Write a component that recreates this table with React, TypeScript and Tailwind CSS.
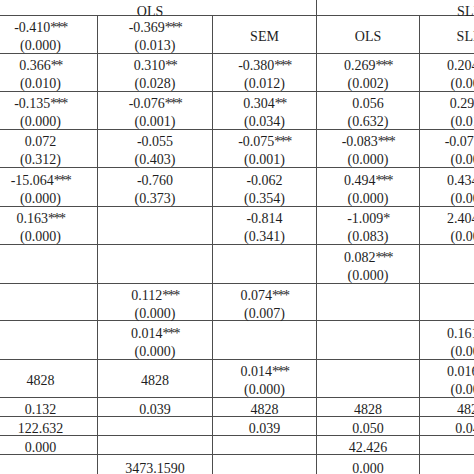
import type { ReactNode } from 'react';

type Cell = string[];

// heights of the body rows, px (border included)
const rowHeights = [38, 38, 38, 38, 39, 38, 39, 37, 39, 38, 19, 19, 19, 24];

const rows: Cell[][] = [
  [['-0.410***', '(0.000)'], ['-0.369***', '(0.013)'], ['SEM'], ['OLS'], ['SLM'], []],
  [['0.366**', '(0.010)'], ['0.310**', '(0.028)'], ['-0.380***', '(0.012)'], ['0.269***', '(0.002)'], ['0.204***', '(0.006)'], []],
  [['-0.135***', '(0.000)'], ['-0.076***', '(0.001)'], ['0.304**', '(0.034)'], ['0.056', '(0.632)'], ['0.295**', '(0.013)'], []],
  [['0.072', '(0.312)'], ['-0.055', '(0.403)'], ['-0.075***', '(0.001)'], ['-0.083***', '(0.000)'], ['-0.077***', '(0.000)'], []],
  [['-15.064***', '(0.000)'], ['-0.760', '(0.373)'], ['-0.062', '(0.354)'], ['0.494***', '(0.000)'], ['0.434***', '(0.000)'], []],
  [['0.163***', '(0.000)'], [], ['-0.814', '(0.341)'], ['-1.009*', '(0.083)'], ['2.404***', '(0.000)'], []],
  [[], [], [], ['0.082***', '(0.000)'], [], []],
  [[], ['0.112***', '(0.000)'], ['0.074***', '(0.007)'], [], [], []],
  [[], ['0.014***', '(0.000)'], [], [], ['0.161***', '(0.000)'], []],
  [['4828'], ['4828'], ['0.014***', '(0.000)'], [], ['0.016***', '(0.000)'], []],
  [['0.132'], ['0.039'], ['4828'], ['4828'], ['4828'], []],
  [['122.632'], [], ['0.039'], ['0.050'], ['0.046'], []],
  [['0.000'], [], [], ['42.426'], [], []],
  [[], ['3473.1590'], [], ['0.000'], [], []],
];

// stars are set a bit tighter, like the original typeface
function Value({ text }: { text: string }): ReactNode {
  const m = text.match(/^(.*?)(\*+)$/);
  if (!m) return text;
  return (
    <>
      {m[1]}
      <span className="tracking-[-1.5px]">{m[2]}</span>
    </>
  );
}

export default function App() {
  return (
    <div
      className="w-[474px] h-[474px] overflow-hidden bg-white text-[#1e1e1e] text-[14px] leading-[18px]"
      style={{ fontFamily: '"Liberation Serif", "Times New Roman", serif' }}
    >
      <div className="ml-[-16px] w-max grid grid-cols-[114px_115px_104px_103px_103px_103px]">
        <div className="col-span-3 h-[16px] pt-[3px] border-b border-r border-[#4d4d4d] flex justify-center">
          OLS
        </div>
        <div className="col-span-3 h-[16px] pt-[3px] border-b border-[#4d4d4d] flex justify-center">
          SLM
        </div>

        {rows.map((row, r) =>
          row.map((cell, c) => (
            <div
              key={`${r}-${c}`}
              className="flex flex-col items-center justify-center pt-[5px] border-b border-r border-[#4d4d4d] whitespace-nowrap"
              style={{ height: rowHeights[r] }}
            >
              {cell.map((line, i) => (
                <span key={i}>
                  <Value text={line} />
                </span>
              ))}
            </div>
          ))
        )}
      </div>
    </div>
  );
}
